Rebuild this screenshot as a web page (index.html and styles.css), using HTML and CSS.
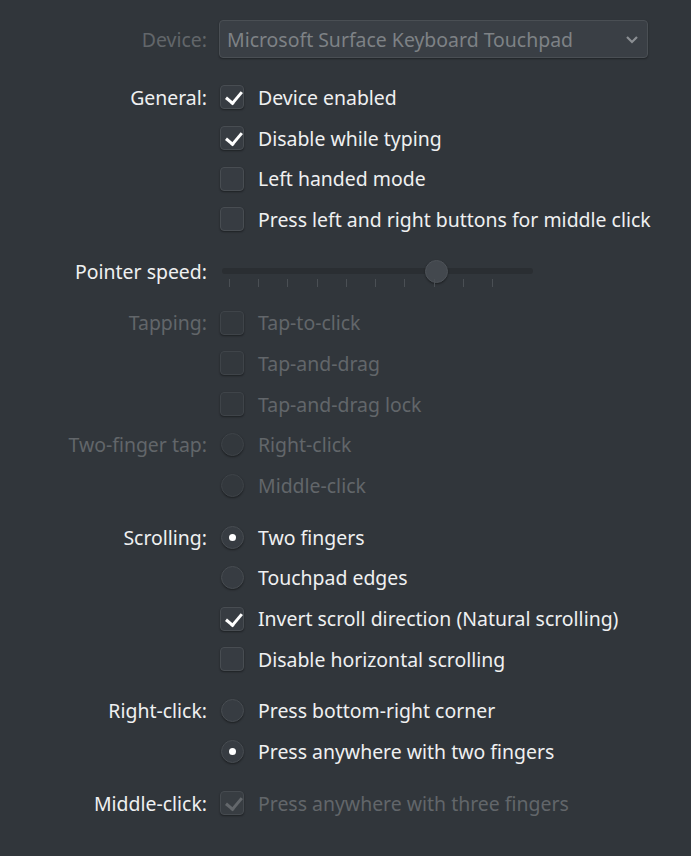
FILE: index.html
```html
<!DOCTYPE html>
<html lang="en">
  <head>
    <meta charset="UTF-8" />
    <title>Touchpad</title>
    <link rel="stylesheet" href="styles.css">
  </head>
  <body>
    <div class="form">
      <!-- 设备 -->
      <div class="group device">
        <div class="label disabled">Device:</div>
        <div class="combo">
          <span>Microsoft Surface Keyboard Touchpad</span>
          <svg width="14" height="9" viewBox="0 0 14 9"><path d="M2 2 L7 7 L12 2" fill="none" stroke="#8b8f93" stroke-width="2.2"/></svg>
        </div>
      </div>

      <div class="group">
        <div class="label">General:</div>
        <div class="opt"><span class="box checked"></span>Device enabled</div>
        <div class="label"></div>
        <div class="opt"><span class="box checked"></span>Disable while typing</div>
        <div class="label"></div>
        <div class="opt"><span class="box"></span>Left handed mode</div>
        <div class="label"></div>
        <div class="opt"><span class="box"></span>Press left and right buttons for middle click</div>
      </div>

      <div class="group">
        <div class="label">Pointer speed:</div>
        <div class="slider">
          <div class="track"></div>
          <div class="handle"></div>
          <div class="ticks">
            <i></i><i></i><i></i><i></i><i></i><i></i><i></i><i></i><i></i><i></i>
          </div>
        </div>
      </div>

      <div class="group disabled">
        <div class="label">Tapping:</div>
        <div class="opt"><span class="box"></span>Tap-to-click</div>
        <div class="label"></div>
        <div class="opt"><span class="box"></span>Tap-and-drag</div>
        <div class="label"></div>
        <div class="opt"><span class="box"></span>Tap-and-drag lock</div>
        <div class="label">Two-finger tap:</div>
        <div class="opt"><span class="radio"></span>Right-click</div>
        <div class="label"></div>
        <div class="opt"><span class="radio"></span>Middle-click</div>
      </div>

      <div class="group">
        <div class="label">Scrolling:</div>
        <div class="opt"><span class="radio checked"></span>Two fingers</div>
        <div class="label"></div>
        <div class="opt"><span class="radio"></span>Touchpad edges</div>
        <div class="label"></div>
        <div class="opt"><span class="box checked"></span>Invert scroll direction (Natural scrolling)</div>
        <div class="label"></div>
        <div class="opt"><span class="box"></span>Disable horizontal scrolling</div>
      </div>

      <div class="group">
        <div class="label">Right-click:</div>
        <div class="opt"><span class="radio"></span>Press bottom-right corner</div>
        <div class="label"></div>
        <div class="opt"><span class="radio checked"></span>Press anywhere with two fingers</div>
      </div>

      <div class="group">
        <div class="label">Middle-click:</div>
        <div class="opt disabled"><span class="box checked"></span>Press anywhere with three fingers</div>
      </div>
    </div>
  </body>
</html>
```

FILE: styles.css
```css
* {
  margin: 0;
  padding: 0;
  box-sizing: border-box;
}
html,
body {
  background-color: #31363b;
}
body {
  width: 691px;
  height: 856px;
  overflow: hidden;
  color: #eff0f1;
  font-family: "Noto Sans", "Open Sans", sans-serif;
  font-size: 19.45px;
}
.form {
  padding-top: 20px;
}
.group {
  display: grid;
  grid-template-columns: 207px 1fr;
  grid-auto-rows: 40.7px;
  column-gap: 13px;
  align-items: center;
  margin-bottom: 11px;
}
.group.device {
  grid-auto-rows: 38px;
  margin-bottom: 19px;
}
.label {
  text-align: right;
  white-space: nowrap;
}
.disabled,
.disabled .label {
  color: #62666a;
}
.opt {
  display: flex;
  align-items: center;
  white-space: nowrap;
}

/* 下拉框 */
.combo {
  width: 429px;
  height: 38px;
  margin-left: -1px;
  display: flex;
  align-items: center;
  justify-content: space-between;
  padding: 0 8px 0 7px;
  background-color: #3a3f45;
  border: 1px solid #4a4f54;
  border-radius: 4px;
  box-shadow: 0 1px 2px rgba(0, 0, 0, 0.35);
  color: #7e8286;
}

/* 复选框 */
.box,
.radio {
  position: relative;
  flex: none;
  width: 24px;
  height: 24px;
  margin-right: 14px;
  background-color: #373c42;
  border: 1px solid #484d52;
  border-radius: 4px;
  box-shadow: 0 1px 2px rgba(0, 0, 0, 0.4);
}
.box.checked::after {
  content: "";
  position: absolute;
  left: 8px;
  top: 2px;
  width: 7px;
  height: 13px;
  border-right: 3px solid #ffffff;
  border-bottom: 3px solid #ffffff;
  transform: rotate(40deg);
}
.disabled .box,
.disabled .radio {
  background-color: #33383d;
  border-color: #3f4449;
}
.disabled .box.checked::after {
  border-color: #63676b;
}
.opt.disabled .box {
  background-color: #383d42;
  border-color: #464b50;
}

/* 单选框 */
.radio {
  width: 23px;
  height: 23px;
  margin-left: 1px;
  border-radius: 50%;
}
.radio.checked::after {
  content: "";
  position: absolute;
  left: 7px;
  top: 7px;
  width: 7px;
  height: 7px;
  border-radius: 50%;
  background-color: #ffffff;
}

/* 滑块 */
.slider {
  position: relative;
  width: 311px;
  height: 40px;
  margin-left: 2px;
}
.track {
  position: absolute;
  left: 0;
  right: 0;
  top: 17px;
  height: 6px;
  background-color: #2a2e32;
  border-radius: 3px;
}
.handle {
  position: absolute;
  left: 203px;
  top: 9px;
  width: 23px;
  height: 23px;
  border-radius: 50%;
  background-color: #43484e;
  border: 1px solid #4e5359;
  box-shadow: 0 1px 2px rgba(0, 0, 0, 0.4);
}
.ticks {
  position: absolute;
  left: 7px;
  top: 28px;
  width: 264px;
  height: 8px;
  display: flex;
  justify-content: space-between;
}
.ticks i {
  display: block;
  width: 1px;
  height: 8px;
  background-color: #4a4f54;
}
```
